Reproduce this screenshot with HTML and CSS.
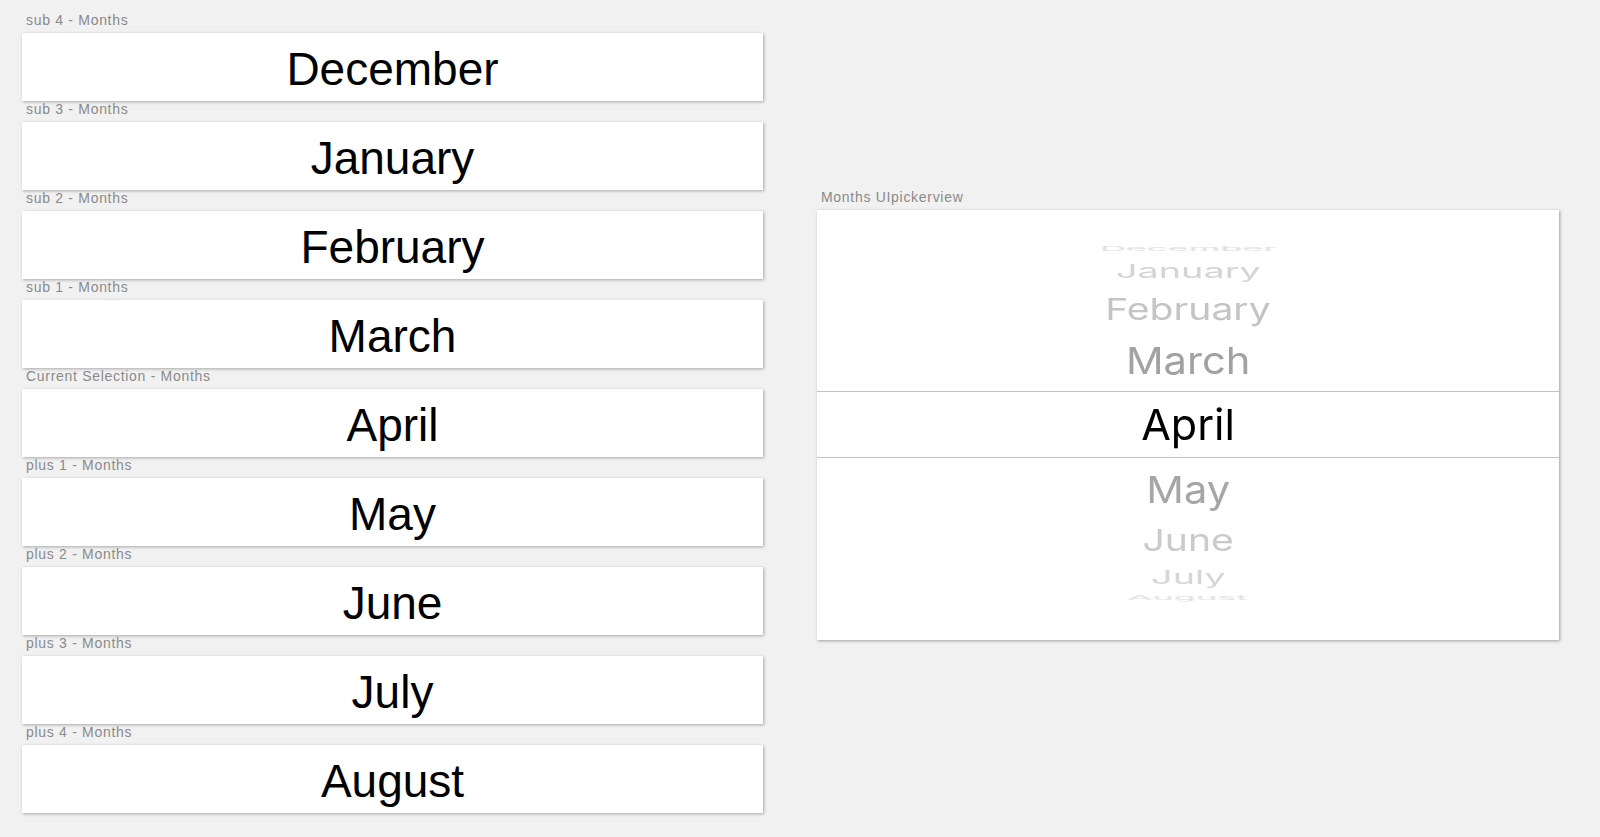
FILE: index.html
```html
<!DOCTYPE html>
<html lang="en">
<head>
    <meta charset="UTF-8">
    <title>Months Picker</title>
    <link rel="stylesheet" href="styles.css">
</head>
<body>
    <div class="page">
        <div class="months-list">
            <div class="item"><div class="label">sub 4 - Months</div><div class="card">December</div></div>
            <div class="item"><div class="label">sub 3 - Months</div><div class="card">January</div></div>
            <div class="item"><div class="label">sub 2 - Months</div><div class="card">February</div></div>
            <div class="item"><div class="label">sub 1 - Months</div><div class="card">March</div></div>
            <div class="item"><div class="label">Current Selection - Months</div><div class="card">April</div></div>
            <div class="item"><div class="label">plus 1 - Months</div><div class="card">May</div></div>
            <div class="item"><div class="label">plus 2 - Months</div><div class="card">June</div></div>
            <div class="item"><div class="label">plus 3 - Months</div><div class="card">July</div></div>
            <div class="item"><div class="label">plus 4 - Months</div><div class="card">August</div></div>
        </div>

        <div class="picker-col">
            <div class="label">Months UIpickerview</div>
            <div class="picker">
                <div class="row r-dec"><span>December</span></div>
                <div class="row r-jan"><span>January</span></div>
                <div class="row r-feb"><span>February</span></div>
                <div class="row r-mar"><span>March</span></div>
                <div class="row selected"><span>April</span></div>
                <div class="row r-may"><span>May</span></div>
                <div class="row r-jun"><span>June</span></div>
                <div class="row r-jul"><span>July</span></div>
                <div class="row r-aug"><span>August</span></div>
            </div>
        </div>
    </div>
</body>
</html>
```

FILE: styles.css
```css
body {
    margin: 0;
    padding: 0;
    background-color: #f1f1f1;
    font-family: "Liberation Sans", Arial, sans-serif;
    min-height: 100vh;
}

.page {
    display: flex;
    align-items: flex-start;
    gap: 54px;
    padding-left: 22px;
    padding-bottom: 20px;
}

.label {
    height: 21px;
    line-height: 16px;
    padding-left: 4px;
    font-size: 14px;
    letter-spacing: 0.7px;
    color: #8a8a8a;
}

.months-list {
    padding-top: 12px;
    width: 741px;
}

.card {
    height: 68px;
    box-sizing: border-box;
    padding-top: 3px;
    background-color: #fff;
    box-shadow: 1px 1px 3px rgba(0, 0, 0, 0.3);
    display: flex;
    justify-content: center;
    align-items: center;
    font-size: 46px;
    color: #000;
}

.picker-col {
    margin-top: 189px;
    width: 742px;
}

.picker {
    height: 430px;
    background-color: #fff;
    box-shadow: 1px 1px 3px rgba(0, 0, 0, 0.35);
    padding-top: 27px;
    box-sizing: border-box;
    display: flex;
    flex-direction: column;
    font-family: Inter, "Liberation Sans", sans-serif;
}

.row {
    display: flex;
    justify-content: center;
    align-items: center;
    overflow: visible;
    font-size: 43px;
    line-height: 1;
    white-space: nowrap;
}

.row span {
    display: inline-block;
}

.r-dec { height: 22px; }
.r-dec span { transform: scale(0.84, 0.14); color: #dcdcdc; filter: blur(1px); }

.r-jan { height: 24px; }
.r-jan span { transform: scale(0.88, 0.45); color: #d4d4d4; filter: blur(0.8px); }

.r-feb { height: 52px; }
.r-feb span { transform: scale(0.91, 0.7); color: #c4c4c4; filter: blur(0.7px); }

.r-mar { height: 50px; margin-bottom: 6px; }
.r-mar span { transform: scale(0.97, 0.87); color: #a2a2a2; filter: blur(0.6px); }

.selected {
    height: 67px;
    box-sizing: border-box;
    border-top: 1px solid #c4c4c4;
    border-bottom: 1px solid #c4c4c4;
    color: #000;
}

.selected span { filter: blur(0.3px); }

.r-may { height: 62px; }
.r-may span { transform: scale(0.97, 0.87); color: #a6a6a6; filter: blur(0.6px); }

.r-jun { height: 40px; }
.r-jun span { transform: scale(0.91, 0.7); color: #cacaca; filter: blur(0.7px); }

.r-jul { height: 34px; }
.r-jul span { transform: scale(0.88, 0.45); color: #d6d6d6; filter: blur(0.8px); }

.r-aug { height: 6px; }
.r-aug span { transform: scale(0.84, 0.14); color: #dedede; filter: blur(1px); }
```
